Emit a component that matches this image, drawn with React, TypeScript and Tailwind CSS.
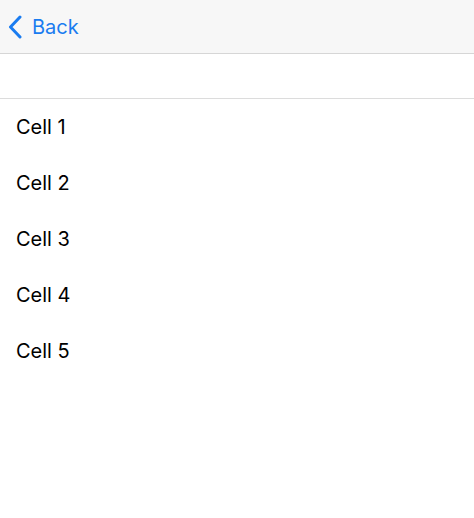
export default function App() {
  const cells = ["Cell 1", "Cell 2", "Cell 3", "Cell 4", "Cell 5"];
  return (
    <div className="h-[518px] w-[474px] bg-white font-['Inter',sans-serif]">
      <div className="flex h-[54px] items-center border-b border-[#d6d6d6] bg-[#f7f7f7] pl-[8px]">
        <svg width="14" height="24" viewBox="0 0 14 24" className="mr-[10px]">
          <path d="M12 2 L2.5 12 L12 22" fill="none" stroke="#1a7cf0" strokeWidth="3" strokeLinecap="round" strokeLinejoin="round" />
        </svg>
        <span className="text-[20px] text-[#1a7cf0]">Back</span>
      </div>
      <div className="h-[45px] border-b border-[#dcdcdc]" />
      <div>
        {cells.map((c) => (
          <div key={c} className="flex h-[56px] items-center pl-[16px] text-[20px] text-black">
            {c}
          </div>
        ))}
      </div>
    </div>
  );
}
